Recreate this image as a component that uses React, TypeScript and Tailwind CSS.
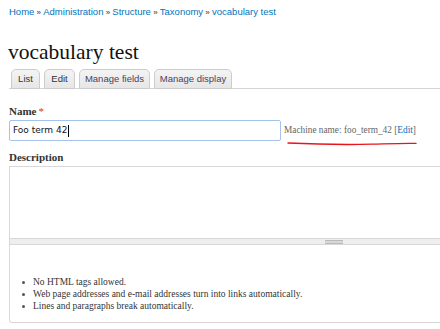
export default function App() {
  return (
    <main className="w-[440px] h-[329px] overflow-hidden bg-white pl-[9px]">

      {/* BREADCRUMB */}

      <div className="pt-[6px] h-[20px] text-[9.5px] leading-[12px] whitespace-nowrap font-['Liberation_Sans',Arial,sans-serif] text-[#0074bd]">
        <a>Home</a>
        <span className="text-[#333] text-[8px]"> » </span>
        <a>Administration</a>
        <span className="text-[#333] text-[8px]"> » </span>
        <a>Structure</a>
        <span className="text-[#333] text-[8px]"> » </span>
        <a>Taxonomy</a>
        <span className="text-[#333] text-[8px]"> » </span>
        <a>vocabulary test</a>
      </div>

      {/* TITLE */}

      <h1 className="mt-[18px] text-[21.5px] leading-[28px] font-['Liberation_Serif',Georgia,serif] text-[#111] -ml-[1px]">
        vocabulary test
      </h1>

      {/* TABS */}

      <div className="mt-[3px] flex items-end h-[20px] border-b border-[#d4d4d4] -mr-[1px] pl-[2px] gap-[4px] font-['Liberation_Sans',Arial,sans-serif] text-[9.5px] whitespace-nowrap">
        <Tab label="List" w="w-[29px]" />
        <Tab label="Edit" w="w-[31px]" />
        <Tab label="Manage fields" w="w-[71px]" color="text-[#4c3f5e]" />
        <Tab label="Manage display" w="w-[78px]" color="text-[#4c3f5e]" />
      </div>

      {/* NAME */}

      <div className="mt-[16px] text-[11px] leading-[13px] font-['Liberation_Serif',Georgia,serif] font-bold text-[#333]">
        Name<span className="text-[#e4332e] font-normal ml-[2px]">*</span>
      </div>

      <div className="mt-[2px] flex items-center">
        <div className="w-[272px] h-[21px] border border-[#a5c2ec] rounded-[2px] flex items-center px-[3px] text-[9px] font-['DejaVu_Sans',Verdana,sans-serif] text-[#111]">
          Foo term 42<span className="w-px h-[12px] bg-black ml-[1px]" />
        </div>
        <div className="relative ml-[3px] text-[9.3px] leading-[11px] whitespace-nowrap font-['Liberation_Serif',Georgia,serif] text-[#666]">
          Machine name: foo_term_42 [<span className="text-[#0074bd]">Edit</span>]
          <svg
            className="absolute left-[3px] top-[16px]"
            width="131"
            height="6"
            viewBox="0 0 131 6"
            fill="none"
          >
            <path
              d="M1 2.0 C 30 3.4, 60 3.8, 85 3.2 C 105 2.6, 118 2.0, 129 2.4"
              stroke="#e8141a"
              strokeWidth="1.3"
              strokeLinecap="round"
            />
          </svg>
        </div>
      </div>

      {/* DESCRIPTION */}

      <div className="mt-[10px] text-[11px] leading-[13px] font-['Liberation_Serif',Georgia,serif] font-bold text-[#333]">
        Description
      </div>

      <div className="mt-[2px] -mr-[4px]">
        <div className="h-[72px] border border-[#d8d8d8] border-b-0 bg-white" />

        <div className="h-[7px] border border-[#d8d8d8] bg-[#eeeeee] flex">
          <div className="ml-[315px] mt-[1px] w-[18px] h-[4px] border-y border-[#bbbbbb] bg-[#d8d8d8]" />
        </div>

        <div className="h-[78px] border border-t-0 border-[#d8d8d8] rounded-bl-[3px] pt-[31px]">
          <ul className="pl-[12px] text-[9.5px] leading-[12px] whitespace-nowrap font-['Liberation_Serif',Georgia,serif] text-[#333]">
            <li className="flex items-center gap-[8px]"><span className="w-[3px] h-[3px] rounded-full bg-[#555]" />No HTML tags allowed.</li>
            <li className="flex items-center gap-[8px]"><span className="w-[3px] h-[3px] rounded-full bg-[#555]" />Web page addresses and e-mail addresses turn into links automatically.</li>
            <li className="flex items-center gap-[8px]"><span className="w-[3px] h-[3px] rounded-full bg-[#555]" />Lines and paragraphs break automatically.</li>
          </ul>
        </div>
      </div>

    </main>
  );
}

function Tab({ label, w, color = "text-[#333]" }: { label: string; w: string; color?: string }) {
  return (
    <div
      className={`${w} h-[20px] -mb-px flex items-center justify-center border border-[#cccccc] rounded-t-[5px] bg-gradient-to-b from-[#f4f4f4] to-[#e6e6e6] ${color}`}
    >
      {label}
    </div>
  );
}
